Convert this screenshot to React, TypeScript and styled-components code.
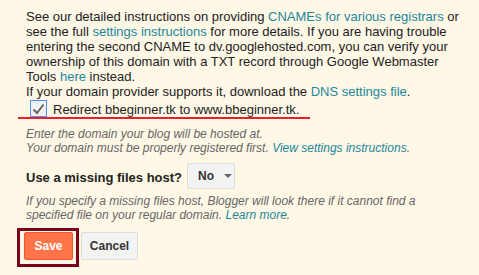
import React from "react";
import styled, { createGlobalStyle } from "styled-components";

const Global = createGlobalStyle`
  html, body { margin: 0; padding: 0; background: #fff8e7; }
  body { font-family: "Liberation Sans", Arial, sans-serif; color: #222; }
`;

const Page = styled.div`
  width: 479px;
  height: 275px;
  box-sizing: border-box;
  padding: 9px 0 0 26px;
  background: #fff8e7;
  overflow: hidden;
`;

const Para = styled.p`
  margin: 0;
  font-size: 13px;
  line-height: 15px;
  color: #222;
  white-space: nowrap;
`;

const Link = styled.a`
  color: #21879b;
  text-decoration: none;
`;

const CheckRow = styled.label`
  display: flex;
  align-items: center;
  gap: 6px;
  margin: 2px 0 0 -8px;
  width: 292px;
  height: 18px;
  padding-left: 12px;
  box-sizing: border-box;
  border-bottom: 2px solid #e8202e;
  font-size: 13px;
  color: #222;
`;

const Box = styled.span`
  width: 17px;
  height: 17px;
  box-sizing: border-box;
  border: 1px solid #4d90fe;
  background: #f1f1f1;
  display: flex;
  align-items: center;
  justify-content: center;
  margin-top: -1px;
`;

const Hint = styled.p<{ $top: number }>`
  margin: ${(p) => p.$top}px 0 0;
  font-size: 12px;
  line-height: 14px;
  font-style: italic;
  color: #666;
  white-space: nowrap;
`;

const Question = styled.div`
  display: flex;
  align-items: center;
  gap: 5px;
  margin-top: 8px;
`;

const Label = styled.span`
  font-size: 13px;
  font-weight: bold;
  color: #222;
  margin-top: 3px;
`;

const Select = styled.div`
  width: 48px;
  height: 26px;
  box-sizing: border-box;
  background: #f3f3f3;
  border: 1px solid #dcdcdc;
  border-radius: 2px;
  display: flex;
  align-items: center;
  padding-left: 10px;
  gap: 10px;
  font-size: 12px;
  font-weight: bold;
  color: #333;
`;

const Arrow = styled.span`
  width: 0;
  height: 0;
  border-left: 4px solid transparent;
  border-right: 4px solid transparent;
  border-top: 4px solid #666;
`;

const Buttons = styled.div`
  display: flex;
  align-items: flex-start;
  margin: 6px 0 0 -9px;
`;

const Frame = styled.div`
  border: 3px solid #7b0418;
  padding: 1px 3px 4px 4px;
  display: flex;
`;

const Button = styled.button<{ $primary?: boolean }>`
  height: 28px;
  box-sizing: border-box;
  padding: 0;
  font-family: "Liberation Sans", Arial, sans-serif;
  font-size: 12px;
  font-weight: bold;
  border-radius: 2px;
  border: 1px solid ${(p) => (p.$primary ? "#f05a2d" : "#dcdcdc")};
  background: ${(p) => (p.$primary ? "#ff7448" : "#f3f3f3")};
  color: ${(p) => (p.$primary ? "#fff" : "#333")};
  width: ${(p) => (p.$primary ? "49px" : "57px")};
`;

const CancelWrap = styled.div`
  margin: 4px 0 0 2px;
  display: flex;
`;

export default function App() {
  return (
    <>
      <Global />
      <Page>
        <Para>
          See our detailed instructions on providing <Link>CNAMEs for various registrars</Link> or
          <br />
          see the full <Link>settings instructions</Link> for more details. If you are having trouble
          <br />
          entering the second CNAME to dv.googlehosted.com, you can verify your
          <br />
          ownership of this domain with a TXT record through Google Webmaster
          <br />
          Tools <Link>here</Link> instead.
          <br />
          If your domain provider supports it, download the <Link>DNS settings file</Link>.
        </Para>
        <CheckRow>
          <Box>
            <svg width="13" height="12" viewBox="0 0 13 12">
              <path d="M1.5 6.5 L5 10 L11.5 1.5" fill="none" stroke="#666" strokeWidth="2" />
            </svg>
          </Box>
          Redirect bbeginner.tk to www.bbeginner.tk.
        </CheckRow>
        <Hint $top={8}>
          Enter the domain your blog will be hosted at.
          <br />
          Your domain must be properly registered first. <Link>View settings instructions</Link>.
        </Hint>
        <Question>
          <Label>Use a missing files host?</Label>
          <Select>
            No <Arrow />
          </Select>
        </Question>
        <Hint $top={5}>
          If you specify a missing files host, Blogger will look there if it cannot find a
          <br />
          specified file on your regular domain. <Link>Learn more</Link>.
        </Hint>
        <Buttons>
          <Frame>
            <Button $primary>Save</Button>
          </Frame>
          <CancelWrap>
            <Button>Cancel</Button>
          </CancelWrap>
        </Buttons>
      </Page>
    </>
  );
}
